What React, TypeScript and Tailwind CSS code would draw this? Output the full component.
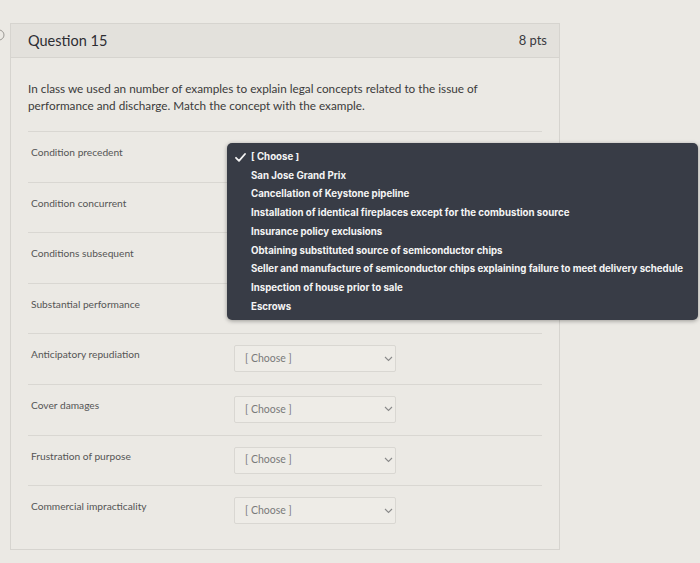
import React from 'react';

const concepts = [
  'Condition precedent',
  'Condition concurrent',
  'Conditions subsequent',
  'Substantial performance',
  'Anticipatory repudiation',
  'Cover damages',
  'Frustration of purpose',
  'Commercial impracticality',
];

const options = [
  'San Jose Grand Prix',
  'Cancellation of Keystone pipeline',
  'Installation of identical fireplaces except for the combustion source',
  'Insurance policy exclusions',
  'Obtaining substituted source of semiconductor chips',
  'Seller and manufacture of semiconductor chips explaining failure to meet delivery schedule',
  'Inspection of house prior to sale',
  'Escrows',
];

const SelectBox: React.FC = () => (
  <div className="mt-[11px] ml-[2px] flex h-[27px] w-[162px] items-center justify-between rounded-[2px] border border-[#d9d7d2] bg-[#eeece7] pl-[10px] pr-[2px]">
    <span className="text-[10.5px] text-[#7a7a7a]">[ Choose ]</span>
    <svg width="9" height="6" viewBox="0 0 9 6" fill="none">
      <path d="M1 1l3.5 3.5L8 1" stroke="#8a8a8a" strokeWidth="1.1" />
    </svg>
  </div>
);

// Open native-style dropdown for the first row
const OpenMenu: React.FC = () => (
  <div className="absolute left-[227px] top-[143px] w-[471px] rounded-[5px] bg-[#383c46] pb-[4px] pt-[5px] shadow-[0_1px_4px_rgba(0,0,0,0.35)] font-['Inter',sans-serif] text-[9.7px] font-bold text-[#f4f4f4]">
    <div className="flex h-[18.7px] items-center">
      <span className="flex w-[24px] justify-center pl-[3px]">
        <svg width="11" height="9" viewBox="0 0 11 9" fill="none">
          <path d="M1 4.8l3 3L10 1" stroke="#f4f4f4" strokeWidth="1.8" strokeLinecap="round" strokeLinejoin="round" />
        </svg>
      </span>
      <span>[ Choose ]</span>
    </div>
    {options.map((o) => (
      <div key={o} className="flex h-[18.7px] items-center pl-[24px]">
        {o}
      </div>
    ))}
  </div>
);

export default function App() {
  return (
    <div className="relative h-[563px] w-[700px] overflow-hidden bg-[#ebe9e4] font-['Lato',sans-serif]">
      {/* partially hidden nav chevron at left edge */}
      <svg className="absolute left-[-6px] top-[28px]" width="12" height="14" viewBox="0 0 12 14" fill="none">
        <circle cx="5" cy="7" r="5" stroke="#9a9894" strokeWidth="1" />
      </svg>

      <div className="ml-[10px] mt-[23px] w-[550px] border border-[#d6d4cf] bg-[#ebe9e4]">
        <div className="flex h-[34px] items-center justify-between border-b border-[#d6d4cf] bg-[#e3e1dc] pl-[17px] pr-[12px]">
          <span className="text-[14.5px] text-[#2d2d33]">Question 15</span>
          <span className="text-[13px] text-[#3a3a40]">8 pts</span>
        </div>

        <div className="px-[17px] pb-[13px] pt-[22px]">
          <p className="text-[11.75px] leading-[17px] text-[#3b3b3b]">
            In class we used an number of examples to explain legal concepts related to the issue of
            <br />
            performance and discharge. Match the concept with the example.
          </p>

          <div className="mt-[17px]">
            {concepts.map((c, i) => (
              <div key={c} className="flex h-[50.6px] items-start border-t border-[#d9d7d2]">
                <span className="w-[204px] pl-[3px] pt-[13px] text-[10.2px] text-[#555]">{c}</span>
                {i >= 4 && <SelectBox />}
              </div>
            ))}
          </div>
        </div>
      </div>

      <OpenMenu />
    </div>
  );
}
